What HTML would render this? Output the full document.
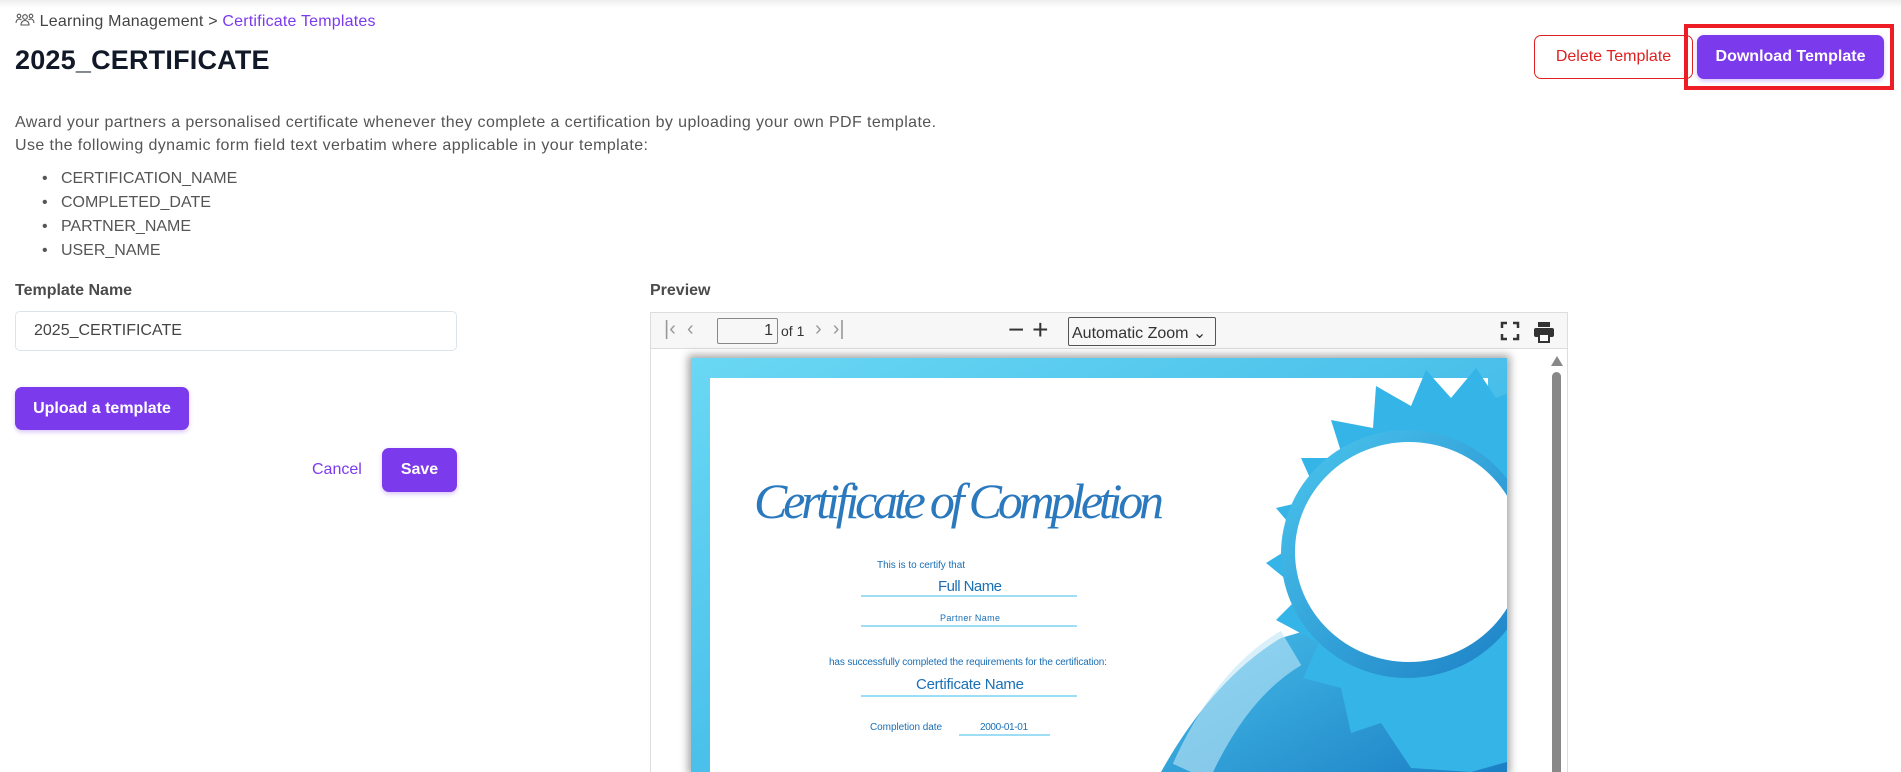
<!DOCTYPE html>
<html style="overflow:hidden;height:772px"><head><meta charset="utf-8"><style>
*{box-sizing:border-box;margin:0;padding:0}
body{width:1901px;height:772px;overflow:hidden;background:#fff;font-family:"Liberation Sans",sans-serif;position:relative;color:#4b4b4b}
.a{position:absolute;white-space:nowrap}
.btn{position:absolute;background:#7c3aed;color:#fff;border-radius:7px;font-weight:bold;font-size:16px;display:flex;align-items:center;justify-content:center;box-shadow:0 2px 5px rgba(124,58,237,.3)}
</style></head><body>
<div class="a" style="left:0;top:0;width:1901px;height:8px;background:linear-gradient(#eee,#fff)"></div>
<div class="a" style="left:15px;top:13px;font-size:16px;color:#444;letter-spacing:.2px">
<svg width="20" height="14" viewBox="0 0 20 14" style="vertical-align:-1px" fill="none" stroke="#555" stroke-width="1.1"><circle cx="10" cy="4" r="2.3"/><circle cx="4" cy="3" r="1.8"/><circle cx="16" cy="3" r="1.8"/><path d="M6 12c0-3 2-4.5 4-4.5s4 1.5 4 4.5z M1 10c0-2.5 1.5-4 3-4s2 .5 2.5 1 M19 10c0-2.5-1.5-4-3-4s-2 .5-2.5 1"/></svg>
Learning Management &gt; <span style="color:#7c3aed">Certificate Templates</span></div>
<div class="a" style="left:15px;top:45px;font-size:27px;font-weight:bold;color:#111827;letter-spacing:.2px">2025_CERTIFICATE</div>
<div class="a" style="left:1534px;top:35px;width:159px;height:44px;border:1px solid #e02020;border-radius:7px;color:#e02020;font-size:16px;display:flex;align-items:center;justify-content:center">Delete Template</div>
<div class="btn" style="left:1697px;top:35px;width:187px;height:44px">Download Template</div>
<div class="a" style="left:1684px;top:24px;width:210px;height:66px;border:4px solid #ee1c25"></div>
<div class="a" style="left:15px;top:111px;font-size:16px;line-height:23px;color:#555;letter-spacing:.4px">Award your partners a personalised certificate whenever they complete a certification by uploading your own PDF template.<br>Use the following dynamic form field text verbatim where applicable in your template:</div>
<div class="a" style="left:42px;top:167px;font-size:16px;line-height:24px;color:#555">
<div>•&nbsp;&nbsp;&nbsp;CERTIFICATION_NAME</div><div>•&nbsp;&nbsp;&nbsp;COMPLETED_DATE</div><div>•&nbsp;&nbsp;&nbsp;PARTNER_NAME</div><div>•&nbsp;&nbsp;&nbsp;USER_NAME</div></div>
<div class="a" style="left:15px;top:282px;font-size:16px;font-weight:bold;color:#4b4b4b">Template Name</div>
<div class="a" style="left:15px;top:311px;width:442px;height:40px;border:1px solid #dde3ea;border-radius:5px;font-size:16px;padding:10px 18px;color:#444">2025_CERTIFICATE</div>
<div class="btn" style="left:15px;top:387px;width:174px;height:43px">Upload a template</div>
<div class="a" style="left:312px;top:461px;font-size:16px;color:#7c3aed">Cancel</div>
<div class="btn" style="left:382px;top:448px;width:75px;height:44px">Save</div>
<div class="a" style="left:650px;top:282px;font-size:16px;font-weight:bold;color:#4b4b4b">Preview</div>
<div class="a" style="left:650px;top:312px;width:918px;height:460px;border:1px solid #ddd;border-bottom:none;background:#fff"></div>
<div class="a" style="left:651px;top:313px;width:916px;height:36px;background:#f7f7f7;border-bottom:1px solid #ddd"></div>
<div class="a" style="left:664px;top:318px;font-size:20px;color:#999">|‹&nbsp;&nbsp;‹</div>
<div class="a" style="left:717px;top:318px;width:61px;height:26px;border:1px solid #888;border-radius:2px;font-size:16px;text-align:right;padding:3px 4px;color:#333">1</div>
<div class="a" style="left:781px;top:323px;font-size:14px;color:#333">of 1</div>
<div class="a" style="left:815px;top:318px;font-size:20px;color:#999">›&nbsp;&nbsp;›|</div>
<div class="a" style="left:1008px;top:314px;font-size:28px;color:#333">−&nbsp;+</div>
<div class="a" style="left:1068px;top:317px;width:148px;height:29px;border:1px solid #555;border-radius:2px;font-size:16px;padding:5px 3px;color:#333">Automatic Zoom ⌄</div>
<svg class="a" style="left:1500px;top:321px" width="20" height="20" viewBox="0 0 20 20" fill="none" stroke="#333" stroke-width="2.5"><path d="M2 7V2h5M13 2h5v5M18 13v5h-5M7 18H2v-5"/></svg>
<svg class="a" style="left:1533px;top:321px" width="22" height="22" viewBox="0 0 22 22" fill="#333"><rect x="5" y="1" width="12" height="5"/><rect x="1" y="7" width="20" height="9" rx="2"/><rect x="6" y="13" width="10" height="8" fill="#fff" stroke="#333" stroke-width="2"/></svg>
<div class="a" style="left:1551px;top:356px;width:0;height:0;border-left:6px solid transparent;border-right:6px solid transparent;border-bottom:10px solid #888"></div>
<div class="a" style="left:1552px;top:372px;width:9px;height:400px;background:#888;border-radius:5px 5px 0 0"></div>
<div class="a" style="left:691px;top:358px;width:816px;height:414px;box-shadow:0 0 8px 3px rgba(0,0,0,.35)"></div>
<svg class="a" style="left:691px;top:358px" width="816" height="414" viewBox="0 0 816 414">
<defs><linearGradient id="b" x1="0" y1="0" x2="1" y2="1"><stop offset="0" stop-color="#6ad8f4"/><stop offset="1" stop-color="#2aa8e0"/></linearGradient>
<linearGradient id="r" x1="0" y1="0" x2="1" y2="1"><stop offset="0" stop-color="#4cc6ee"/><stop offset="1" stop-color="#1b7fc4"/></linearGradient>
<clipPath id="c"><rect width="816" height="414"/></clipPath></defs>
<rect width="816" height="414" fill="url(#b)"/>
<rect x="19" y="20" width="778" height="400" fill="#fff"/>
<g clip-path="url(#c)">
<path d="M470 414 C500 360 540 310 590 280 L760 230 L816 240 L816 414Z" fill="url(#r)"/>
<path d="M500 414 C520 370 550 320 600 290" stroke="#bfe6f6" stroke-width="40" fill="none" opacity=".6"/>
<polygon points="720,410 690,365 660,375 650,330 612,320 628,285 585,262 612,235 575,205 612,182 585,150 628,140 610,100 652,100 640,62 682,70 685,28 720,48 735,12 760,40 785,10 805,40 830,30 830,400 780,414" fill="#35b4e8"/>
<ellipse cx="716" cy="196" rx="126" ry="124" fill="url(#r)"/>
<ellipse cx="718" cy="194" rx="114" ry="110" fill="#fff"/>
</g>
<text x="268" y="160" text-anchor="middle" font-family="Liberation Serif,serif" font-style="italic" font-size="50" fill="#2a78bd" textLength="410">Certificate of Completion</text>
<g font-family="Liberation Sans,sans-serif" fill="#1a6fb5" text-anchor="middle">
<text x="230" y="210" font-size="10" textLength="88">This is to certify that</text>
<text x="279" y="233" font-size="15" textLength="64">Full Name</text>
<line x1="170" y1="238" x2="386" y2="238" stroke="#7fd3f0" stroke-width="1.5"/>
<text x="279" y="263" font-size="9" textLength="60">Partner Name</text>
<line x1="170" y1="268" x2="386" y2="268" stroke="#7fd3f0" stroke-width="1.5"/>
<text x="277" y="307" font-size="10" textLength="278">has successfully completed the requirements for the certification:</text>
<text x="279" y="331" font-size="15" textLength="108">Certificate Name</text>
<line x1="170" y1="338" x2="386" y2="338" stroke="#7fd3f0" stroke-width="1.5"/>
<text x="215" y="372" font-size="10" textLength="72">Completion date</text>
<text x="313" y="372" font-size="10" textLength="48">2000-01-01</text>
<line x1="268" y1="377" x2="359" y2="377" stroke="#7fd3f0" stroke-width="1.5"/>
</g></svg>
</body></html>
